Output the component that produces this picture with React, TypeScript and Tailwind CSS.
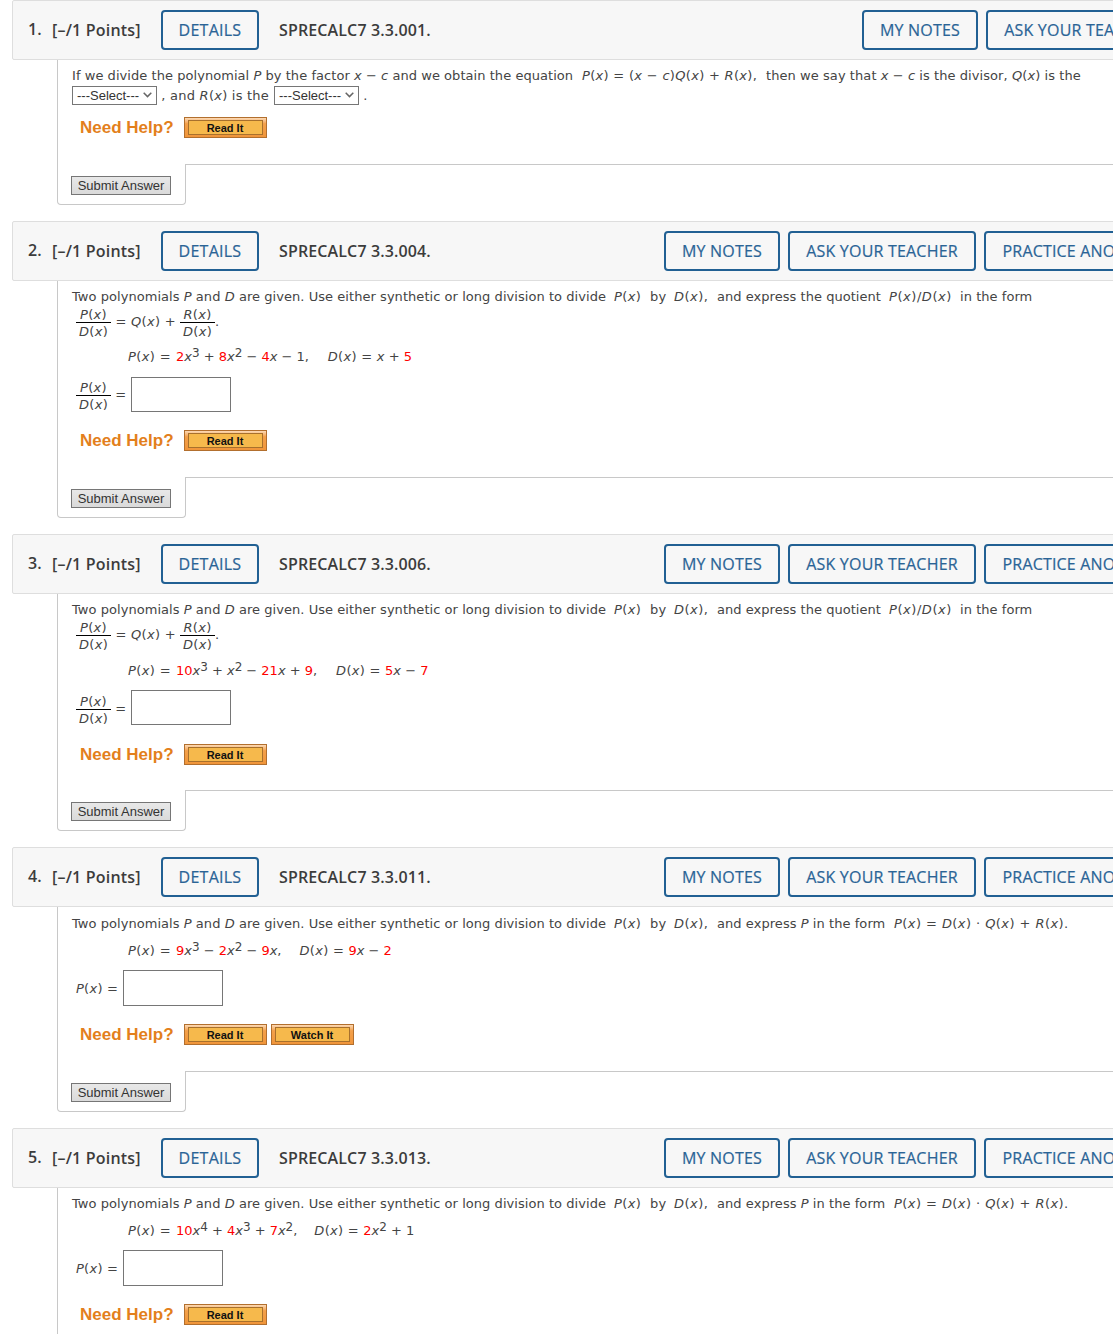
import React from "react";

type Kids = { children: React.ReactNode };

/** Renders a compact math markup: letters in {braces} are italic, text in [brackets] is red, ^n is a superscript. */
function M({ t, className = "" }: { t: string; className?: string }) {
  const parts = t.match(/\{[^}]*\}|\[[^\]]*\]|\^\d|[^{}[\]^]+/g) ?? [];
  return (
    <span className={`whitespace-pre ${className}`}>
      {parts.map((p, i) => {
        if (p[0] === "{") return <i key={i}>{p.slice(1, -1)}</i>;
        if (p[0] === "[") return <span key={i} className="text-[#ff0000]">{p.slice(1, -1)}</span>;
        if (p[0] === "^") return <span key={i} className="relative -top-[4px] text-[12px]">{p[1]}</span>;
        return <React.Fragment key={i}>{p}</React.Fragment>;
      })}
    </span>
  );
}

function HeaderButton({ children, className }: Kids & { className: string }) {
  return (
    <button className={`h-10 shrink-0 rounded-[4px] border-2 border-[#216093] text-center text-base leading-[36px] font-medium whitespace-nowrap text-[#2a6496] [-webkit-text-stroke:0.2px_#2a6496] ${className}`}>
      {children}
    </button>
  );
}

function Header({ n, code, practice }: { n: number; code: string; practice: boolean }) {
  return (
    <div className="ml-3 flex h-[60px] w-[1178px] items-center rounded-[2px] border border-[#dedede] bg-[#f7f7f7] pr-[15px] pl-[15px] font-['Open_Sans',sans-serif] text-base font-semibold whitespace-nowrap text-[#3c3c3c]">
      <span className="w-6 pb-0.5">{n}.</span>
      <span className="w-[109px] tracking-[0.2px]">[–/1 Points]</span>
      <HeaderButton className="w-[98px] tracking-[0.25px]">DETAILS</HeaderButton>
      <span className="ml-5 tracking-[0.13px]">{code}</span>
      <div className="ml-auto flex gap-2">
        <HeaderButton className="w-[116px] tracking-[0.2px]">MY NOTES</HeaderButton>
        <HeaderButton className="w-[188px] tracking-[0.2px]">ASK YOUR TEACHER</HeaderButton>
        {practice && <HeaderButton className="w-[190px] tracking-[0.18px]">PRACTICE ANOTHER</HeaderButton>}
      </div>
    </div>
  );
}

function HelpButton({ children }: Kids) {
  return (
    <button className="h-[21px] w-[83px] border border-[#b26f2e] bg-linear-to-b from-[#fbd9b4] via-[#f3a04a] via-30% to-[#f0953a] p-[2px] px-[3px]">
      <span className="block h-[15px] border border-[#a8702c] bg-[#f6b94c] pr-px text-center font-['Liberation_Sans',Arial,sans-serif] text-[11px] leading-[14px] font-bold text-[#111]">
        {children}
      </span>
    </button>
  );
}

function Help({ watch = false }: { watch?: boolean }) {
  return (
    <div className="ml-[22px] flex h-[21px] gap-1">
      <span className="w-[100px] font-['Liberation_Sans',Arial,sans-serif] text-[17px] leading-[21px] font-bold text-[#e37f1c]">Need Help?</span>
      <HelpButton>Read It</HelpButton>
      {watch && <HelpButton>Watch It</HelpButton>}
    </div>
  );
}

function Footer() {
  return (
    <div className="flex h-[41px]">
      <div className="-ml-px w-[129px] rounded-b-[4px] border-r border-b border-l border-[#c8c8c8] bg-white pt-3 pl-[13px]">
        <button className="block h-[19px] w-[100px] border border-[#767676] bg-linear-to-b from-[#e8e8e8] to-[#dadada] text-center font-['Liberation_Sans',Arial,sans-serif] text-[13px] leading-[17px] whitespace-nowrap text-[#333]">
          Submit Answer
        </button>
      </div>
      <div className="flex-1 border-t border-[#c8c8c8]" />
    </div>
  );
}

function Select() {
  return (
    <span className="flex h-[19px] w-[85px] items-center border border-[#767676] bg-white pl-1 font-['Liberation_Sans',Arial,sans-serif] text-[13px] leading-[17px] text-[#333]">
      <span className="w-[66px]">---Select---</span>
      <svg width="9" height="6" viewBox="0 0 9 6" fill="none" stroke="#666" strokeWidth="1.5">
        <path d="M0.7 0.8 L4.5 4.6 L8.3 0.8" />
      </svg>
    </span>
  );
}

function Fraction({ top, bottom, className = "" }: { top: string; bottom: string; className?: string }) {
  return (
    <span className={`flex w-[35px] flex-col text-center tracking-[0.3px] ${className}`}>
      <span className="h-[16px] border-b border-black leading-[15px]"><M t={top} /></span>
      <span className="h-[17px] leading-[17px]"><M t={bottom} /></span>
    </span>
  );
}

function Question({ n, code, practice = true, body, watch, last, children }: Kids & { n: number; code: string; practice?: boolean; body: string; watch?: boolean; last?: boolean }) {
  return (
    <section>
      <Header n={n} code={code} practice={practice} />
      <div className={`ml-[57px] ${last ? "border-l border-[#c8c8c8]" : ""}`}>
        <div className={`flex flex-col ${last ? "" : "border-l border-[#c8c8c8]"} ${body}`}>
          {children}
          <Help watch={watch} />
        </div>
        {!last && <div className="pb-4 pl-px"><Footer /></div>}
      </div>
    </section>
  );
}

const line = "ml-[14px] flex h-5 items-center whitespace-pre";

/** Opening words shared by every division problem, up to "D(x),". */
function Intro() {
  return (
    <>
      <M t="Two polynomials {P} and {D} are given. Use either synthetic or long division to divide" className="w-[542px] tracking-[0.05px]" />
      <M t="{P}({x})" className="w-9 tracking-[0.4px]" />
      <M t="by" className="w-6 tracking-[0.2px]" />
      <M t="{D}({x})," className="w-[43px] tracking-[0.5px]" />
    </>
  );
}

function Given({ p, d, className, gap = "ml-[19px]" }: { p: string; d: string; className: string; gap?: string }) {
  return (
    <div className={`ml-[70px] flex h-5 items-center ${className}`}>
      <M t="{P}({x}) = " className="w-12 tracking-[0.4px]" />
      <M t={p} className="tracking-[-0.02px]" />
      <M t="{D}({x}) = " className={`w-[49px] tracking-[0.3px] ${gap}`} />
      <M t={d} />
    </div>
  );
}

function Quotient({ n, code, p, d, low = false }: { n: number; code: string; p: string; d: string; low?: boolean }) {
  return (
    <Question n={n} code={code} body="h-[196px]">
      <div className={`${line} mt-[6px]`}>
        <Intro />
        <M t="and express the quotient" className="w-[172px] tracking-[0.04px]" />
        <M t="{P}({x})/{D}({x})" className="w-[71px] tracking-[0.55px]" />
        <M t="in the form" className="tracking-[0.05px]" />
      </div>
      <div className="ml-[18px] flex h-[33px] items-center">
        <Fraction top="{P}({x})" bottom="{D}({x})" />
        <M t=" = {Q}({x}) +" className="mb-[3px] w-[69px] tracking-[0.3px]" />
        <Fraction top="{R}({x})" bottom="{D}({x})" />
        <span className="mb-[3px]">.</span>
      </div>
      <Given p={p} d={d} className={low ? "mt-2" : "mt-[7px]"} />
      <div className={`ml-[18px] flex h-[35px] items-center ${low ? "mt-[9px]" : "mt-[10px]"}`}>
        <Fraction top="{P}({x})" bottom="{D}({x})" className={low ? "mt-[5px]" : "mt-[3px]"} />
        <M t=" =" className={low ? "w-5 pt-0.5" : "w-5"} />
        <input className="h-[35px] w-[100px] border border-[#767676] bg-white" />
      </div>
      <div className={low ? "h-[19px]" : "h-[18px]"} />
    </Question>
  );
}

function Product({ n, code, p, d, watch, last }: { n: number; code: string; p: string; d: string; watch?: boolean; last?: boolean }) {
  return (
    <Question n={n} code={code} watch={watch} last={last} body={last ? "h-[160px]" : "h-[164px]"}>
      <div className={`${line} ${last ? "mt-[6px]" : "mt-[7px]"}`}>
        <Intro />
        <M t="and express {P} in the form" className="w-[177px] tracking-[0.06px]" />
        <M t="{P}({x}) = {D}({x}) · {Q}({x}) + {R}({x})." className="tracking-[0.43px]" />
      </div>
      <Given p={p} d={d} className="mt-[7px]" gap={last ? "ml-[17px]" : "ml-[18px]"} />
      <div className="mt-[9px] ml-[18px] flex h-9 items-center">
        <M t="{P}({x}) =" className="w-[47px] pt-0.5 tracking-[0.25px]" />
        <input className="h-9 w-[100px] border border-[#767676] bg-white" />
      </div>
      <div className="h-[18px]" />
    </Question>
  );
}

export default function App() {
  return (
    <main className="h-[1334px] w-[1113px] overflow-hidden bg-white font-['Verdana','DejaVu_Sans',sans-serif] text-[13px] text-[#444]">
      <Question n={1} code="SPRECALC7 3.3.001." practice={false} body="h-[104px]">
        <div className={`${line} mt-[6px]`}>
          <M t="If we divide the polynomial {P} by the factor {x} − {c} and we obtain the equation" className="w-[510px] tracking-[0.05px]" />
          <M t="{P}({x}) = ({x} − {c}){Q}({x}) + {R}({x})," className="w-[184px] tracking-[0.3px]" />
          <M t="then we say that {x} − {c} is the divisor, {Q}({x}) is the" className="tracking-[0.07px]" />
        </div>
        <div className={`${line} -mt-px`}>
          <Select />
          <M t=" , and {R}({x}) is the" className="w-[117px] pt-0.5 tracking-[0.23px]" />
          <Select />
          <span className="pt-0.5"> .</span>
        </div>
        <div className="h-3" />
      </Question>
      <Quotient n={2} code="SPRECALC7 3.3.004." p="[2]{x}^3 + [8]{x}^2 − [4]{x} − 1," d="{x} + [5]" />
      <Quotient n={3} code="SPRECALC7 3.3.006." p="[10]{x}^3 + {x}^2 − [21]{x} + [9]," d="[5]{x} − [7]" low />
      <Product n={4} code="SPRECALC7 3.3.011." p="[9]{x}^3 − [2]{x}^2 − [9]{x}," d="[9]{x} − [2]" watch />
      <Product n={5} code="SPRECALC7 3.3.013." p="[10]{x}^4 + [4]{x}^3 + [7]{x}^2," d="[2]{x}^2 + 1" last />
    </main>
  );
}
